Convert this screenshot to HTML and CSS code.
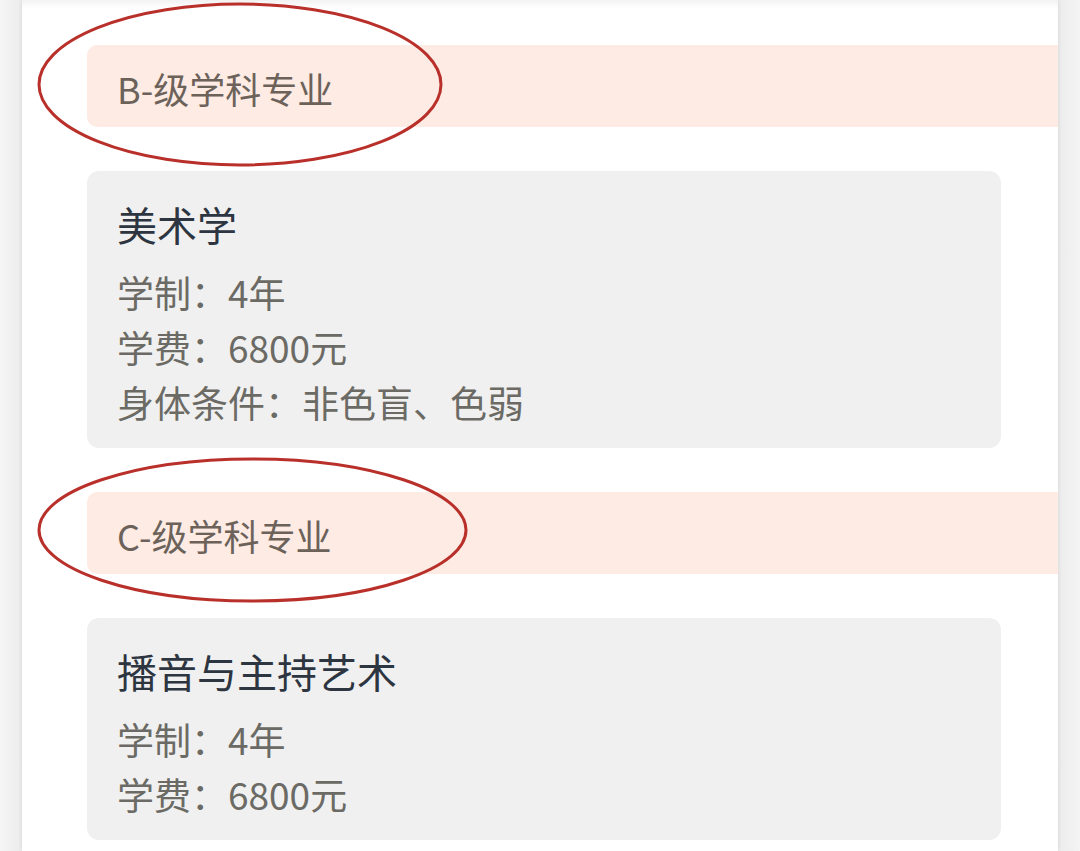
FILE: index.html
```html
<!DOCTYPE html>
<html lang="zh-CN">
  <head>
    <meta charset="UTF-8" />
    <meta name="viewport" content="width=device-width, initial-scale=1.0" />
    <title>专业介绍</title>
    <link rel="stylesheet" href="styles.css">
  </head>
  <body>
    <div class="panel">
      <div class="level">
        <div class="level-head">
          B-级学科专业
          <svg class="ring ring-b" viewBox="0 0 406 165">
            <ellipse cx="203" cy="82.5" rx="201" ry="80.5" />
          </svg>
        </div>
        <div class="major">
          <div class="major-name">美术学</div>
          <p>学制：4年</p>
          <p>学费：6800元</p>
          <p>身体条件：非色盲、色弱</p>
        </div>
      </div>

      <div class="level">
        <div class="level-head">
          C-级学科专业
          <svg class="ring ring-c" viewBox="0 0 431 146">
            <ellipse cx="215.5" cy="73" rx="213.5" ry="71" />
          </svg>
        </div>
        <div class="major">
          <div class="major-name">播音与主持艺术</div>
          <p>学制：4年</p>
          <p>学费：6800元</p>
        </div>
      </div>
    </div>
  </body>
</html>
```

FILE: styles.css
```css
body {
  margin: 0;
  background: linear-gradient(to right, #f5f5f5 0, #ececec 22px, #ececec 1058px, #f4f4f4 100%);
  font-family: "Noto Sans CJK SC", "Noto Sans", sans-serif;
  overflow: hidden;
}
.panel {
  margin: 0 22px;
  min-height: 851px;
  background: #fff;
  box-shadow: 0 0 4px rgba(0, 0, 0, 0.1), inset 0 8px 8px -6px rgba(0, 0, 0, 0.08);
  padding: 45px 0 0 65px;
  box-sizing: border-box;
}
.level + .level {
  margin-top: 44px;
}
.level-head {
  position: relative;
  height: 82px;
  display: flex;
  align-items: center;
  padding: 3px 0 0 30px;
  box-sizing: border-box;
  background: #fdebe4;
  border-radius: 10px 0 0 10px;
  font-size: 36px;
  color: #6c625a;
}
.ring {
  position: absolute;
  left: -50px;
  fill: none;
  stroke: #b9302b;
  stroke-width: 3;
}
.ring-b {
  top: -43px;
  width: 406px;
  height: 165px;
}
.ring-c {
  top: -35px;
  width: 431px;
  height: 146px;
}
.major {
  margin: 44px 57px 0 0;
  padding: 25px 30px 18px;
  background: #f0f0f0;
  border-radius: 12px;
}
.major-name {
  font-size: 40px;
  line-height: 56px;
  color: #2d3540;
  margin-bottom: 13px;
}
.major p {
  margin: 0;
  font-size: 37px;
  line-height: 55px;
  color: #6b6a64;
}
```
